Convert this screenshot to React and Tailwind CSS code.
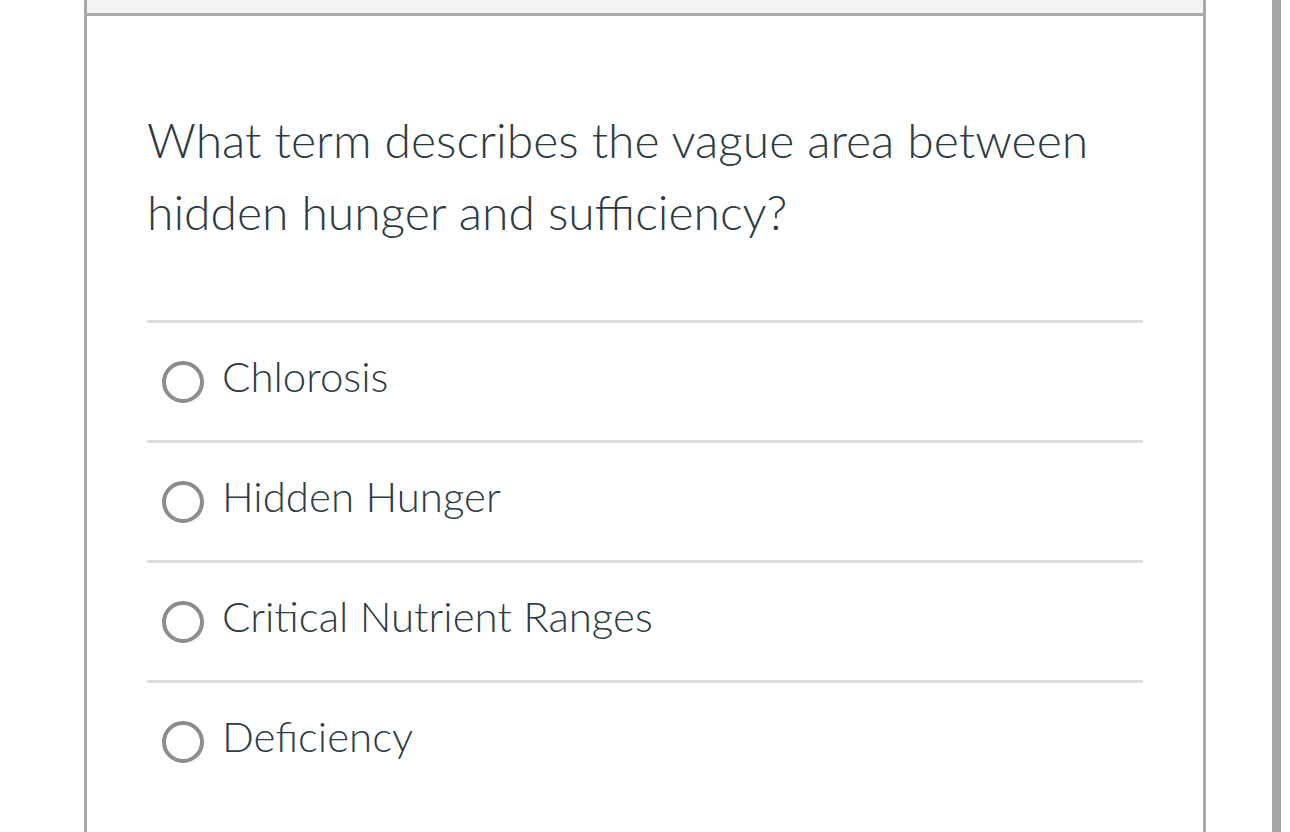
import React from "react";

const options = ["Chlorosis", "Hidden Hunger", "Critical Nutrient Ranges", "Deficiency"];

function Radio() {
  return (
    <div className="ml-[15px] w-[42px] h-[42px] shrink-0 rounded-full border-[4px] border-[#8c8c8c] bg-white" />
  );
}

export default function App() {
  return (
    <div
      className="w-[1290px] h-[832px] bg-white overflow-hidden flex text-[#2d3b45]"
      style={{ fontFamily: "Lato, 'Noto Sans', sans-serif" }}
    >
      <div className="ml-[84px] w-[1122px] shrink-0 border-x-[3px] border-[#aaaaaa] flex flex-col">
        <div className="h-[16px] shrink-0 bg-[#f3f3f3] border-b-[3px] border-[#aaaaaa]" />
        <div className="px-[60px] pt-[88px]">
          <p className="text-[48px] leading-[72px] font-light">
            What term describes the vague area between hidden hunger and sufficiency?
          </p>
          <div className="mt-[72px]">
            {options.map((o) => (
              <div
                key={o}
                className="h-[120px] border-t-[3px] border-[#dcdcdc] flex items-center"
              >
                <Radio />
                <span className="ml-[18px] text-[42px] leading-[48px] font-light -mt-[12px]">{o}</span>
              </div>
            ))}
          </div>
        </div>
      </div>
      <div className="ml-[66px] w-[9px] shrink-0 bg-[#a6a6a6]" />
    </div>
  );
}
